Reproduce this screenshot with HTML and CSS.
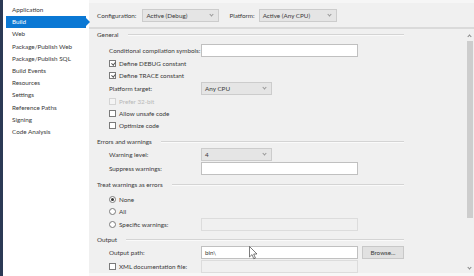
FILE: index.html
```html
<!DOCTYPE html>
<html lang="en">
<head>
  <meta charset="UTF-8" />
  <title>Build</title>
  <link rel="stylesheet" href="styles.css">
</head>
<body>
  <div class="window">
    <!-- project property pages -->
    <ul class="nav">
      <li>Application</li>
      <li class="active">Build</li>
      <li>Web</li>
      <li>Package/Publish Web</li>
      <li>Package/Publish SQL</li>
      <li>Build Events</li>
      <li>Resources</li>
      <li>Settings</li>
      <li>Reference Paths</li>
      <li>Signing</li>
      <li>Code Analysis</li>
    </ul>

    <div class="main">
      <div class="topbar">
        <span class="lbl">Configuration:</span>
        <div class="combo combo-config"><span>Active (Debug)</span><i class="chev"></i></div>
        <span class="lbl lbl-platform">Platform:</span>
        <div class="combo combo-platform"><span>Active (Any CPU)</span><i class="chev"></i></div>
      </div>

      <div class="panel">
        <div class="content">
          <div class="section s-general">General</div>
          <div class="row r-field r-first">
            <span class="field-lbl">Conditional compilation symbols:</span>
            <div class="input"></div>
          </div>
          <div class="row r-check"><i class="box checked"></i>Define DEBUG constant</div>
          <div class="row r-check"><i class="box checked"></i>Define TRACE constant</div>
          <div class="row r-field">
            <span class="field-lbl">Platform target:</span>
            <div class="combo combo-small"><span>Any CPU</span><i class="chev"></i></div>
          </div>
          <div class="row r-check disabled"><i class="box"></i>Prefer 32-bit</div>
          <div class="row r-check"><i class="box"></i>Allow unsafe code</div>
          <div class="row r-check"><i class="box"></i>Optimize code</div>

          <div class="section s-gap">Errors and warnings</div>
          <div class="row r-field">
            <span class="field-lbl">Warning level:</span>
            <div class="combo combo-small"><span>4</span><i class="chev"></i></div>
          </div>
          <div class="row r-field">
            <span class="field-lbl">Suppress warnings:</span>
            <div class="input"></div>
          </div>

          <div class="section s-treat">Treat warnings as errors</div>
          <div class="row r-check r-radio-first"><i class="radio on"></i>None</div>
          <div class="row r-check"><i class="radio"></i>All</div>
          <div class="row r-field">
            <span class="radio-lbl"><i class="radio"></i>Specific warnings:</span>
            <div class="input off"></div>
          </div>

          <div class="section s-output">Output</div>
          <div class="row r-field">
            <span class="field-lbl">Output path:</span>
            <div class="input">bin\</div>
            <div class="btn">Browse...</div>
          </div>
          <div class="row r-field">
            <span class="radio-lbl"><i class="box"></i>XML documentation file:</span>
            <div class="input off"></div>
          </div>
        </div>

        <div class="scrollbar">
          <div class="sb-arrow"><i class="sb-chev up"></i></div>
          <div class="sb-track"><div class="sb-thumb"></div></div>
          <div class="sb-arrow"><i class="sb-chev"></i></div>
        </div>
      </div>
    </div>

    <svg class="cursor" width="9" height="14" viewBox="0 0 9 14">
      <path d="M0.5 0.5 L0.5 11 L3 8.6 L4.8 12.8 L6.4 12.1 L4.7 8 L8 8 Z" fill="#fff" stroke="#444" stroke-width="0.7" stroke-linejoin="round"/>
    </svg>
  </div>
</body>
</html>
```

FILE: styles.css
```css
* {
  box-sizing: border-box;
}

body {
  margin: 0;
  font-family: Lato, "Open Sans", sans-serif;
  font-size: 6.3px;
  color: #3a3a3a;
  background: #fff;
}

.window {
  position: relative;
  display: flex;
  width: 474px;
  height: 276px;
  overflow: hidden;
}

/* left navigation */
.nav {
  list-style: none;
  margin: 0;
  padding: 4px 0 0 3px;
  width: 89px;
  flex-shrink: 0;
  background: #fff;
  border-left: 3px solid #2b3a55;
}

.nav li {
  height: 12.2px;
  line-height: 12.2px;
  padding-left: 6px;
  margin-right: 3px;
  white-space: nowrap;
  position: relative;
}

.nav li.active {
  background: #0a78d4;
  color: #fff;
}

.nav li.active::after {
  content: "";
  position: absolute;
  right: -4px;
  top: 2px;
  border-left: 4px solid #0a78d4;
  border-top: 4px solid transparent;
  border-bottom: 4px solid transparent;
}

/* right side */
.main {
  flex: 1;
  display: flex;
  flex-direction: column;
  background: #f0f0f0;
}

.topbar {
  display: flex;
  align-items: center;
  height: 29px;
  padding: 0 0 0 8px;
  border-top: 3px solid #f6f6f6;
  border-bottom: 2px solid #dadada;
}

.lbl-platform {
  margin-left: 10px;
}

.combo {
  position: relative;
  display: flex;
  align-items: center;
  height: 13px;
  padding-left: 3px;
  background: #e5e5e5;
  border: 1px solid #cccccc;
  white-space: nowrap;
}

.combo-config {
  width: 77px;
  margin-left: 6px;
}

.combo-platform {
  width: 78px;
  margin-left: 4px;
}

.combo-small {
  width: 71px;
}

.chev {
  position: absolute;
  right: 5px;
  top: 3px;
  width: 3px;
  height: 3px;
  border-right: 1px solid #999;
  border-bottom: 1px solid #999;
  transform: rotate(45deg);
}

.panel {
  flex: 1;
  display: flex;
  border-bottom: 3px solid #f7f7f7;
  overflow: hidden;
}

.content {
  flex: 1;
  display: flex;
  flex-direction: column;
  padding: 0 61px 0 8px;
}

.section {
  display: flex;
  align-items: center;
  height: 12px;
  white-space: nowrap;
}

.section::after {
  content: "";
  flex: 1;
  height: 1px;
  margin-left: 9px;
  background: #d4d4d4;
  box-shadow: 0 1px 0 #fafafa;
}

.s-general {
  height: 11px;
}

.s-gap {
  margin-top: 4px;
}

.s-treat {
  margin-top: 3px;
}

.s-output {
  margin-top: 2px;
}

.row {
  display: flex;
  align-items: center;
  white-space: nowrap;
  padding-left: 12px;
}

.r-field {
  height: 13px;
  margin-top: 1px;
}

.r-first {
  margin-top: 4px;
}

.r-check {
  height: 12px;
}

.r-radio-first {
  margin-top: 3px;
}

.field-lbl,
.radio-lbl {
  display: flex;
  align-items: center;
  width: 92px;
  flex-shrink: 0;
}

.input {
  width: 157px;
  height: 13px;
  padding-left: 3px;
  line-height: 11px;
  background: #fff;
  border: 1px solid #c0c0c0;
}

.input.off {
  background: #f0f0f0;
  border-color: #dcdcdc;
}

.btn {
  width: 42px;
  height: 13px;
  margin-left: 4px;
  text-align: center;
  line-height: 11px;
  background: #e1e1e1;
  border: 1px solid #c8c8c8;
}

.box {
  position: relative;
  width: 7px;
  height: 7px;
  margin-right: 3px;
  border: 1px solid #7a7a7a;
  background: #fff;
}

.box.checked::after {
  content: "";
  position: absolute;
  left: 1.6px;
  top: 0.2px;
  width: 1.6px;
  height: 3.2px;
  border-right: 0.8px solid #555;
  border-bottom: 0.8px solid #555;
  transform: rotate(40deg);
}

.disabled {
  color: #b8b8b8;
}

.disabled .box {
  border-color: #d4d4d4;
  background: #f4f4f4;
}

.radio {
  position: relative;
  width: 7px;
  height: 7px;
  margin-right: 3px;
  border: 1px solid #7a7a7a;
  border-radius: 50%;
  background: #fff;
}

.radio.on::after {
  content: "";
  position: absolute;
  left: 1px;
  top: 1px;
  width: 3px;
  height: 3px;
  border-radius: 50%;
  background: #333;
}

/* scrollbar */
.scrollbar {
  display: flex;
  flex-direction: column;
  width: 9px;
  background: #f0f0f0;
  padding-top: 3px;
}

.sb-arrow {
  position: relative;
  height: 8px;
}

.sb-chev {
  position: absolute;
  left: 3px;
  top: 1px;
  width: 3px;
  height: 3px;
  border-right: 1px solid #888;
  border-bottom: 1px solid #888;
  transform: rotate(45deg);
}

.sb-chev.up {
  top: 3px;
  transform: rotate(-135deg);
}

.sb-track {
  flex: 1;
  padding: 1px 1px 0 2px;
}

.sb-thumb {
  height: 177px;
  background: #cdcdcd;
}

.cursor {
  position: absolute;
  left: 249px;
  top: 246px;
}
```
